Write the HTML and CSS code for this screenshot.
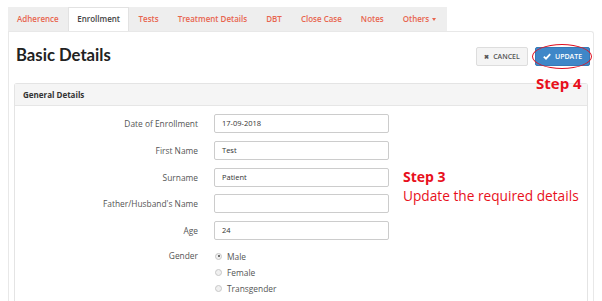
FILE: index.html
```html
<!DOCTYPE html>
<html>
<head>
<meta charset="utf-8">
<link rel="stylesheet" href="styles.css">
</head>
<body>
<div class="page">
  <ul class="tabs">
    <li class="tab">Adherence</li>
    <li class="tab active">Enrollment</li>
    <li class="tab">Tests</li>
    <li class="tab">Treatment Details</li>
    <li class="tab">DBT</li>
    <li class="tab">Close Case</li>
    <li class="tab">Notes</li>
    <li class="tab">Others <span class="caret"></span></li>
  </ul>
  <div class="box">
    <div class="head">
      <h1 class="title">Basic Details</h1>
      <div class="actions">
        <button class="btn cancel"><span class="x">✖</span>CANCEL</button>
        <div class="upd-wrap">
          <button class="btn update"><svg class="chk" width="8" height="7" viewBox="0 0 8 7"><path d="M0.8 3.6 L3 5.7 L7.2 1.2" fill="none" stroke="#fff" stroke-width="1.8"/></svg>UPDATE</button>
          <span class="ring"></span>
          <div class="step4">Step 4</div>
        </div>
      </div>
    </div>
    <div class="panel">
      <div class="panel-h">General Details</div>
      <div class="panel-b">
        <div class="form">
          <div class="row"><label class="lbl">Date of Enrollment</label><div class="inp">17-09-2018</div></div>
          <div class="row"><label class="lbl">First Name</label><div class="inp">Test</div></div>
          <div class="row"><label class="lbl">Surname</label><div class="inp">Patient</div></div>
          <div class="row"><label class="lbl">Father/Husband's Name</label><div class="inp"></div></div>
          <div class="row"><label class="lbl">Age</label><div class="inp">24</div></div>
          <div class="row gender"><label class="lbl">Gender</label>
            <div class="radios">
              <div class="radio"><span class="dot on"></span>Male</div>
              <div class="radio"><span class="dot"></span>Female</div>
              <div class="radio"><span class="dot"></span>Transgender</div>
            </div>
          </div>
        </div>
        <div class="step3">
          <div class="s3a">Step 3</div>
          <div class="s3b">Update the required details</div>
        </div>
      </div>
    </div>
  </div>
</div>
</body>
</html>
```
FILE: styles.css
```css
* { box-sizing: border-box; }
html, body { margin: 0; padding: 0; background: #fff; }
body { font-family: "Open Sans", "Liberation Sans", sans-serif; color: #333; overflow: hidden; }
.page { padding: 7px 8px 0 8px; width: 602px; height: 301px; }
.tabs { list-style: none; margin: 0; padding: 0; display: flex; width: 439px; height: 24px; background: #eeeeee; }
.tab { font-size: 8px; font-weight: 600; color: #e8654f; padding: 0 9.5px; line-height: 24px; white-space: nowrap; }
.tab:first-child { padding-left: 9px; }
.tab.active { background: #fff; color: #444; border: 1px solid #e2e2e2; border-bottom: 0; line-height: 22px; padding: 0 8px; }
.caret { display: inline-block; width: 0; height: 0; border-left: 2.5px solid transparent; border-right: 2.5px solid transparent; border-top: 3px solid #e8654f; vertical-align: middle; margin-left: 1px; }
.box { border: 1px solid #e8e8e8; border-bottom: 0; border-radius: 0 3px 0 0; height: 270px; padding: 0 5px; }
.head { display: flex; justify-content: space-between; align-items: flex-start; height: 51px; }
.title { margin: 13px 0 0 2px; font-family: Lato, "Open Sans", sans-serif; font-size: 16.7px; font-weight: 700; color: #222; }
.actions { display: flex; gap: 7px; margin-top: 15px; margin-right: -2px; }
.btn { font-family: inherit; font-size: 7px; font-weight: 600; height: 19px; border-radius: 2px; padding: 0; display: flex; align-items: center; justify-content: center; }
.cancel { width: 52px; background: #f4f4f4; border: 1px solid #ddd; color: #555; }
.x { font-size: 6px; margin-right: 4px; color: #555; }
.upd-wrap { position: relative; }
.update { width: 55px; background: #3f87c8; border: 1px solid #3679b5; color: #fff; }
.chk { margin-right: 4px; }
.ring { position: absolute; left: -3px; top: -3px; width: 60px; height: 25px; border: 1.6px solid #e01020; border-radius: 50%; }
.step4 { position: absolute; left: 1px; top: 26px; font-size: 15px; font-weight: 700; color: #e8101c; white-space: nowrap; }
.panel { border: 1px solid #e4e4e4; border-bottom: 0; border-radius: 3px 3px 0 0; height: 219px; }
.panel-h { background: #f5f5f5; border-bottom: 1px solid #e6e6e6; height: 22px; line-height: 21px; padding-left: 8px; font-size: 8px; font-weight: 700; color: #333; }
.panel-b { display: flex; }
.form { display: flex; flex-direction: column; gap: 7.8px; padding-top: 8px; }
.row { display: flex; align-items: center; }
.lbl { width: 183px; text-align: right; font-size: 8.4px; color: #555; padding-right: 0; }
.inp { margin-left: 16px; width: 175px; height: 19px; border: 1px solid #ccc; border-radius: 2px; font-size: 7.5px; line-height: 17px; padding-left: 7px; color: #333; }
.row.gender { align-items: flex-start; margin-top: 2px; }
.radios { margin-left: 16px; display: flex; flex-direction: column; gap: 3px; }
.radio { display: flex; align-items: center; font-size: 8.4px; color: #555; height: 13px; }
.dot { width: 7px; height: 7px; border-radius: 50%; border: 1px solid #c8c8c8; background: #f0f0f0; margin-right: 5px; margin-left: 1px; position: relative; }
.dot.on::after { content: ""; position: absolute; left: 1.5px; top: 1.5px; width: 2px; height: 2px; border-radius: 50%; background: #444; }
.step3 { margin-left: 14px; margin-top: 62px; color: #e8101c; }
.s3a { font-size: 14px; font-weight: 700; line-height: 17px; }
.s3b { font-size: 13.7px; line-height: 22px; }
```
